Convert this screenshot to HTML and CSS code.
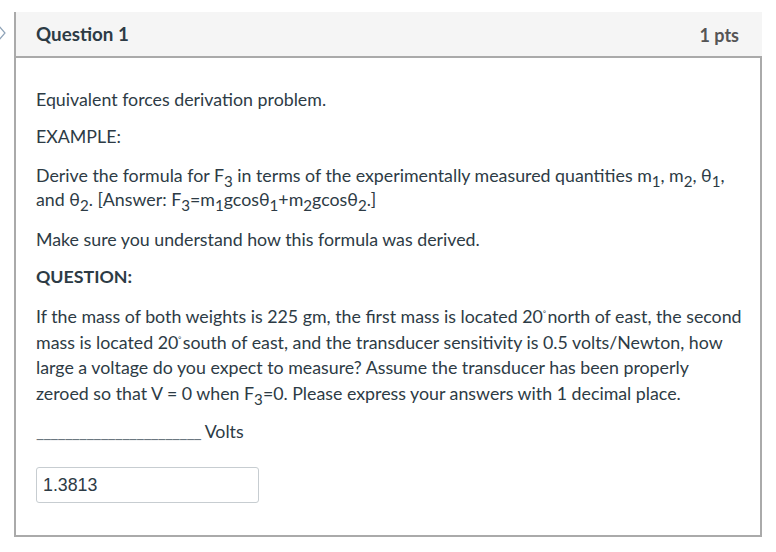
FILE: index.html
```html
<!DOCTYPE html>
<html>
<head>
<meta charset="utf-8">
<link rel="stylesheet" href="styles.css">
</head>
<body>
<svg class="nav-arrow" width="8" height="18" viewBox="0 0 8 18"><path d="M-2 1 L5 9 L-2 17" fill="none" stroke="#8fa3b8" stroke-width="1.2"/></svg>
<div class="question">
  <div class="q-header">
    <span class="q-name">Question 1</span>
    <span class="q-points">1 pts</span>
  </div>
  <div class="q-body">
    <p>Equivalent forces derivation problem.</p>
    <p>EXAMPLE:</p>
    <p class="formula">Derive the formula for F<sub>3</sub> in terms of the experimentally measured quantities m<sub>1</sub>, m<sub>2</sub>, θ<sub>1</sub>, and θ<sub>2</sub>. [Answer: F<sub>3</sub>=m<sub>1</sub>gcosθ<sub>1</sub>+m<sub>2</sub>gcosθ<sub>2</sub>.]</p>
    <p>Make sure you understand how this formula was derived.</p>
    <p class="strong">QUESTION:</p>
    <p class="problem">If the mass of both weights is 225 gm, the first mass is located 20<sup>°</sup> north of east, the second mass is located 20<sup>°</sup> south of east, and the transducer sensitivity is 0.5 volts/Newton, how large a voltage do you expect to measure? Assume the transducer has been properly zeroed so that V = 0 when F<sub>3</sub>=0. Please express your answers with 1 decimal place.</p>
    <p><span class="blank">_______________________</span> Volts</p>
    <div class="answer"><span class="answer-box">1.3813</span></div>
  </div>
</div>
</body>
</html>
```

FILE: styles.css
```css
html, body {
  margin: 0;
  padding: 0;
  background: #ffffff;
}
body {
  font-family: Lato, "Open Sans", sans-serif;
  color: #2d3b45;
  position: relative;
}
.nav-arrow {
  position: absolute;
  left: 0;
  top: 24px;
}
.question {
  margin: 12px 0 0 14px;
  width: 746px;
  border-left: 2px solid #aaaaaa;
}
.q-header {
  background: #f5f5f5;
  height: 44px;
  display: flex;
  align-items: center;
  justify-content: space-between;
  padding: 0 23px 0 20px;
  border-bottom: 2px solid #aaaaaa;
}
.q-name {
  font-weight: 700;
  font-size: 18.8px;
  margin-top: -1px;
}
.q-points {
  font-size: 18px;
  font-weight: 700;
  color: #555555;
  margin-top: 2px;
}
.q-body {
  border-right: 2px solid #aaaaaa;
  border-bottom: 2px solid #aaaaaa;
  padding: 29px 15px 32px 20px;
  font-size: 17.8px;
  line-height: 24px;
}
.q-body p {
  margin: 0 0 13px 0;
}
.q-body .formula {
  padding: 2px 0 3px 0;
}
.q-body .problem {
  line-height: 25.5px;
  padding: 3px 0 0 0;
}
.q-body .strong {
  font-weight: 700;
}
.blank {
  letter-spacing: -1px;
  color: #6b7780;
}
sub, sup {
  font-size: 85%;
  line-height: 0;
}
sup {
  font-size: 40%;
  margin-right: -3px;
}
.answer {
  padding-top: 11px;
}
.answer-box {
  display: block;
  width: 215px;
  height: 34px;
  border: 1px solid #c7cdd1;
  border-radius: 3px;
  padding: 0 0 0 6px;
  font-family: "Liberation Sans", Arial, sans-serif;
  font-size: 17.8px;
  line-height: 34px;
  color: #2d3b45;
}
```
